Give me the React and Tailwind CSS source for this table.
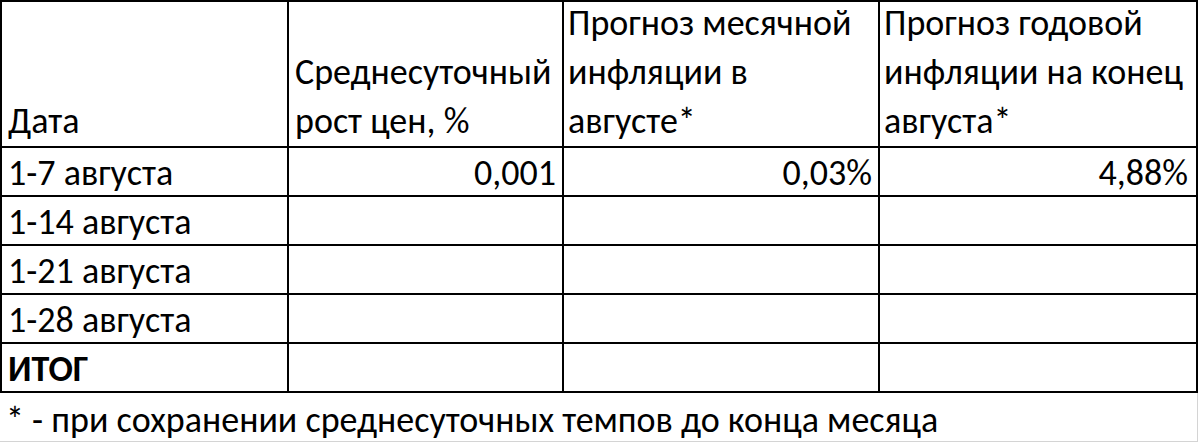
import React from "react";

const font = { fontFamily: "Carlito, 'Open Sans', 'Noto Sans', sans-serif" };

export default function App() {
  const rows = [
    ["1-7 августа", "0,001", "0,03%", "4,88%"],
    ["1-14 августа", "", "", ""],
    ["1-21 августа", "", "", ""],
    ["1-28 августа", "", "", ""],
  ];
  return (
    <div className="w-[1200px] h-[444px] bg-white text-black overflow-hidden" style={font}>
      <div className="grid grid-cols-[287px_275px_316px_318px] border-l-2 border-t-2 border-black w-[1198px] text-[36px] leading-[44px]">
        <div className="h-[146px] border-r-2 border-b-2 border-black flex items-end px-[6px] leading-[49px]">Дата</div>
        <div className="h-[146px] border-r-2 border-b-2 border-black flex items-end px-[6px] leading-[49px]">
          <div>Среднесуточный<br />рост цен, %</div>
        </div>
        <div className="h-[146px] border-r-2 border-b-2 border-black flex items-end px-[4px] leading-[49px]">
          <div>Прогноз месячной<br />инфляции в<br />августе*</div>
        </div>
        <div className="h-[146px] border-r-2 border-b-2 border-black flex items-end px-[4px] leading-[49px]">
          <div>Прогноз годовой<br />инфляции на конец<br />августа*</div>
        </div>
        {rows.map((r, i) => (
          <React.Fragment key={i}>
            <div className="h-[49px] border-r-2 border-b-2 border-black flex items-end px-[6px]">{r[0]}</div>
            <div className="h-[49px] border-r-2 border-b-2 border-black flex items-end justify-end px-[6px]">{r[1]}</div>
            <div className="h-[49px] border-r-2 border-b-2 border-black flex items-end justify-end px-[6px]">{r[2]}</div>
            <div className="h-[49px] border-r-2 border-b-2 border-black flex items-end justify-end px-[8px]">{r[3]}</div>
          </React.Fragment>
        ))}
        <div className="h-[49px] border-r-2 border-b-2 border-black flex items-end px-[6px] font-bold">ИТОГ</div>
        <div className="h-[49px] border-r-2 border-b-2 border-black"></div>
        <div className="h-[49px] border-r-2 border-b-2 border-black"></div>
        <div className="h-[49px] border-r-2 border-b-2 border-black"></div>
      </div>
      <div className="w-[1198px] h-[49px] border-r border-b border-[#d4d4d4] flex items-end px-[6px] text-[36px] leading-[42px]">
        * - при сохранении среднесуточных темпов до конца месяца
      </div>
    </div>
  );
}
